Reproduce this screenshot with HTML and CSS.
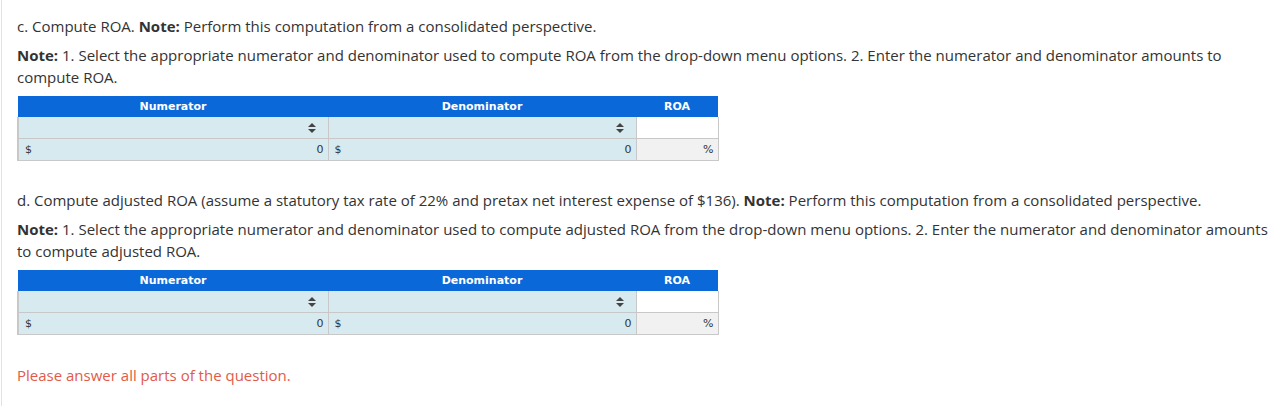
FILE: index.html
```html
<!DOCTYPE html>
<html>
<head>
<meta charset="utf-8">
<link rel="stylesheet" href="styles.css">
</head>
<body>
<div class="page">
  <p class="q first">c. Compute ROA. <b>Note:</b> Perform this computation from a consolidated perspective.</p>
  <p class="q note"><b>Note:</b> 1. Select the appropriate numerator and denominator used to compute ROA from the drop-down menu options. 2. Enter the numerator and denominator amounts to compute ROA.</p>
  <table class="grid">
    <tr class="head"><th class="c1">Numerator</th><th class="c2">Denominator</th><th class="c3">ROA</th></tr>
    <tr class="sel">
      <td><div class="cell sel-cell"><span class="arrows"></span></div></td>
      <td><div class="cell sel-cell"><span class="arrows"></span></div></td>
      <td class="blank"></td>
    </tr>
    <tr class="amt">
      <td><div class="cell"><span>$</span><span>0</span></div></td>
      <td><div class="cell"><span>$</span><span>0</span></div></td>
      <td class="pct"><div class="cell end"><span>%</span></div></td>
    </tr>
  </table>

  <p class="q sec">d. Compute adjusted ROA (assume a statutory tax rate of 22% and pretax net interest expense of $136). <b>Note:</b> Perform this computation from a consolidated perspective.</p>
  <p class="q note"><b>Note:</b> 1. Select the appropriate numerator and denominator used to compute adjusted ROA from the drop-down menu options. 2. Enter the numerator and denominator amounts to compute adjusted ROA.</p>
  <table class="grid">
    <tr class="head"><th class="c1">Numerator</th><th class="c2">Denominator</th><th class="c3">ROA</th></tr>
    <tr class="sel">
      <td><div class="cell sel-cell"><span class="arrows"></span></div></td>
      <td><div class="cell sel-cell"><span class="arrows"></span></div></td>
      <td class="blank"></td>
    </tr>
    <tr class="amt">
      <td><div class="cell"><span>$</span><span>0</span></div></td>
      <td><div class="cell"><span>$</span><span>0</span></div></td>
      <td class="pct"><div class="cell end"><span>%</span></div></td>
    </tr>
  </table>

  <p class="warn">Please answer all parts of the question.</p>
</div>
</body>
</html>
```
FILE: styles.css
```css
html, body { margin: 0; padding: 0; background: #fff; }
.page {
  margin-left: 1px;
  border-left: 1px solid #e2e2e2;
  padding: 15px 12px 20px 15px;
  min-height: 371px;
  font-family: "Open Sans", "Liberation Sans", sans-serif;
  font-size: 15px;
  line-height: 22px;
  color: #333;
}
.q { margin: 0; }
.q b { font-weight: 700; }
.note { margin-top: 7px; }
.sec { margin-top: 28px; }
.grid {
  margin-top: 8px;
  border-collapse: collapse;
  width: 700px;
  table-layout: fixed;
  font-family: "DejaVu Sans", Verdana, sans-serif;
  font-size: 11px;
}
.grid th {
  background: #0b68d9;
  color: #fff;
  font-weight: 700;
  height: 21px;
  padding: 0;
  line-height: 21px;
  text-align: center;
}
.c1 { width: 310px; }
.c2 { width: 308px; }
.c3 { width: 82px; }
.grid td {
  background: #d6eaf0;
  border: 1px solid #c8c8c8;
  padding: 0;
  height: 21px;
  color: #333;
}
.grid tr.sel td:first-child,
.grid tr.amt td:first-child { border-left: 2px solid #c8c8c8; }
.grid tr.sel td { border-top: none; }
.grid td.blank { background: #fff; }
.grid td.pct { background: #f1f1f1; }
.cell {
  display: flex;
  justify-content: space-between;
  align-items: center;
  padding: 0 4px 0 6px;
  height: 21px;
}
.cell.end { justify-content: flex-end; }
.sel-cell { justify-content: flex-end; padding-right: 12px; }
.arrows {
  display: block;
  width: 8px;
  height: 10px;
  position: relative;
}
.arrows::before, .arrows::after {
  content: "";
  position: absolute;
  left: 0;
  border-left: 4px solid transparent;
  border-right: 4px solid transparent;
}
.arrows::before { top: 0; border-bottom: 4px solid #444; }
.arrows::after { bottom: 0; border-top: 4px solid #444; }
.warn {
  margin: 29px 0 0;
  color: #e25a48;
}
```
